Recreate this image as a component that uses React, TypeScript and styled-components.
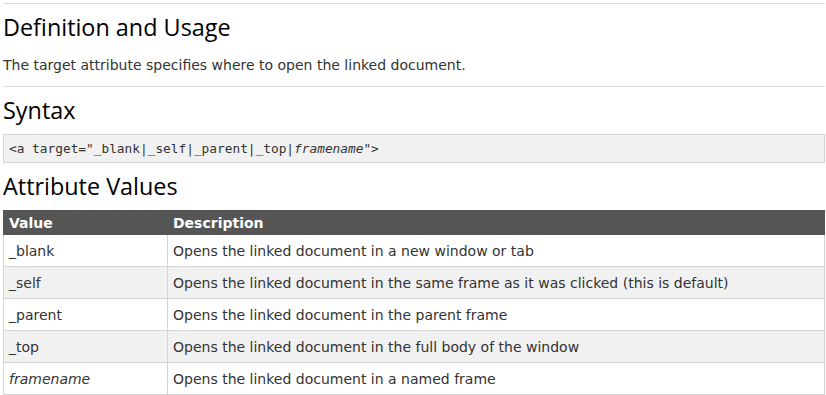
import { createGlobalStyle, styled } from 'styled-components'

type Row = { value: string; italic?: boolean; description: string }

const rows: Row[] = [
  { value: '_blank', description: 'Opens the linked document in a new window or tab' },
  { value: '_self', description: 'Opens the linked document in the same frame as it was clicked (this is default)' },
  { value: '_parent', description: 'Opens the linked document in the parent frame' },
  { value: '_top', description: 'Opens the linked document in the full body of the window' },
  { value: 'framename', italic: true, description: 'Opens the linked document in a named frame' },
]

export default function App() {
  return (
    <Page>
      <GlobalStyle />
      <Rule />
      <Heading>Definition and Usage</Heading>
      <Text>The target attribute specifies where to open the linked document.</Text>
      <Rule />
      <Heading>Syntax</Heading>
      <Code>
        &lt;a target="_blank|_self|_parent|_top|<i>framename</i>"&gt;
      </Code>
      <Heading>Attribute Values</Heading>
      <Table>
        <thead>
          <tr>
            <HeadCell $first>Value</HeadCell>
            <HeadCell>Description</HeadCell>
          </tr>
        </thead>
        <tbody>
          {rows.map((r, i) => (
            <BodyRow key={r.value} $odd={i % 2 === 1}>
              <Cell $italic={r.italic}>{r.value}</Cell>
              <Cell>{r.description}</Cell>
            </BodyRow>
          ))}
        </tbody>
      </Table>
    </Page>
  )
}

const GlobalStyle = createGlobalStyle`
  body {
    margin: 0;
    background: #fff;
    color: #333;
    font-family: 'DejaVu Sans', Verdana, sans-serif;
  }
`

const Page = styled.div`
  width: 822px;
  padding: 3px 1px 0 3px;
`

const Rule = styled.hr`
  margin: 0;
  border: 0;
  height: 1px;
  background: #ddd;
`

const Heading = styled.h2`
  margin: 9px 0 0;
  font-family: 'Open Sans', 'Noto Sans', sans-serif;
  font-size: 23.4px;
  font-weight: 400;
  line-height: 28px;
  color: #000;
`

const Text = styled.p`
  margin: 14px 0 11px;
  font-size: 14px;
  line-height: 20px;
  color: #333;
`

const Code = styled.div`
  margin-top: 10px;
  height: 27px;
  padding: 0 5px;
  display: flex;
  align-items: center;
  background: #f1f1f1;
  border: 1px solid #d4d4d4;
  font-family: 'DejaVu Sans Mono', 'Liberation Mono', monospace;
  font-size: 12.8px;
  color: #333;
  i {
    font-style: italic;
  }
`

const Table = styled.table`
  margin-top: 10px;
  width: 100%;
  border-collapse: collapse;
  border: 1px solid #ccc;
  font-size: 14px;
`

const HeadCell = styled.th<{ $first?: boolean }>`
  height: 23px;
  padding: 0 5px;
  width: ${({ $first }) => ($first ? '153px' : 'auto')};
  background: #555;
  color: #fff;
  text-align: left;
  font-weight: 700;
  border: 1px solid #555;
`

const BodyRow = styled.tr<{ $odd: boolean }>`
  background: ${({ $odd }) => ($odd ? '#f1f1f1' : '#fff')};
`

const Cell = styled.td<{ $italic?: boolean }>`
  height: 31px;
  padding: 0 5px;
  border: 1px solid #d4d4d4;
  font-style: ${({ $italic }) => ($italic ? 'italic' : 'normal')};
  color: #333;
  vertical-align: middle;
`
